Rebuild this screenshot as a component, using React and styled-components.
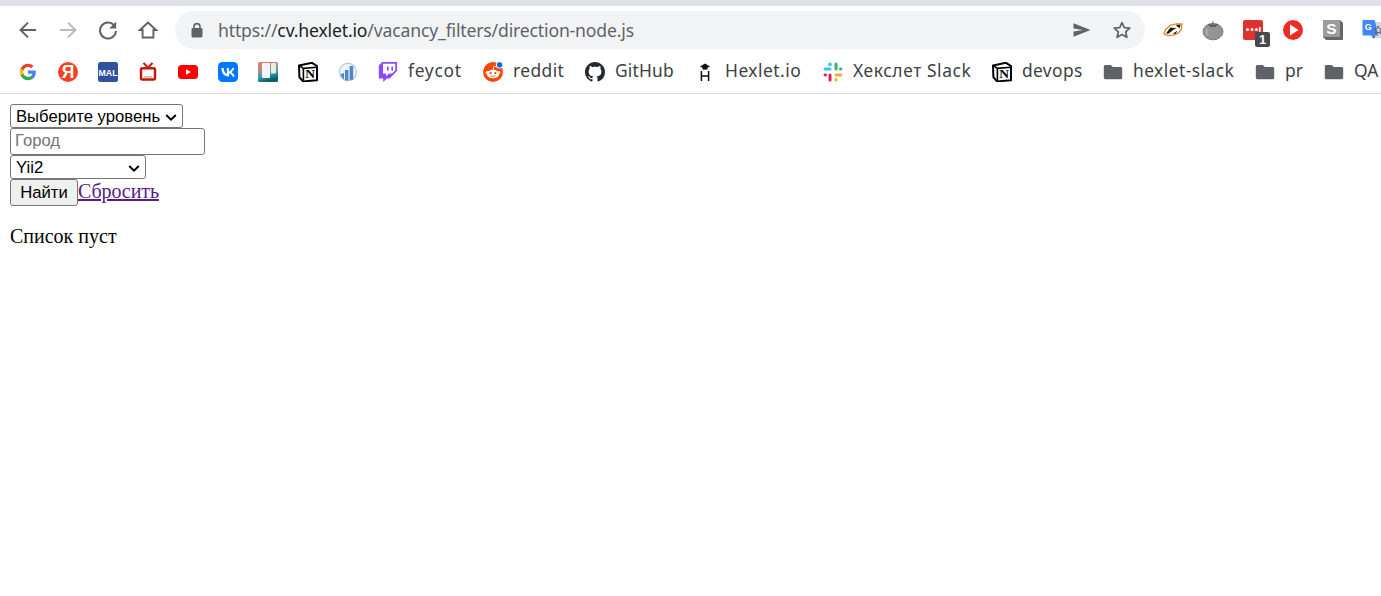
import React from "react";
import styled, { createGlobalStyle } from "styled-components";

const Global = createGlobalStyle`
  html, body { margin: 0; padding: 0; background: #fff; height: 100%; overflow: hidden; }
  #root { width: 1381px; height: 596px; overflow: hidden; }
`;

const Browser = styled.header`
  font-family: "Noto Sans", "Open Sans", sans-serif;
  width: 1381px;
  overflow: hidden;
`;
const TopStrip = styled.div`height: 6px; background: #dee1e6;`;
const Toolbar = styled.div`
  height: 44px;
  box-sizing: border-box;
  display: flex;
  align-items: flex-start;
  padding: 5px 0 0 8px;
  background: #fff;
`;
const IconSlot = styled.div`
  flex: none;
  width: 40px;
  height: 38px;
  display: flex;
  align-items: center;
  justify-content: center;
  position: relative;
`;
const NavSlot = styled(IconSlot)`
  height: 37px;
`;
const Omnibox = styled.div`
  flex: none;
  width: 970px;
  height: 38px;
  margin-left: 7px;
  border-radius: 19px;
  background: #f1f3f4;
  display: flex;
  align-items: center;
  padding: 0 3px 0 15px;
  box-sizing: border-box;
`;
const Url = styled.div`
  flex: 1;
  margin-left: 14px;
  font-size: 17.6px;
  letter-spacing: -0.16px;
  color: #5f6368;
  white-space: nowrap;
`;
const Host = styled.span`color: #202124;`;
const Extensions = styled.div`
  display: flex;
  margin-left: 8px;
  flex: none;
`;
const Badge = styled.span`
  position: absolute;
  left: 22px;
  top: 21px;
  width: 15px;
  height: 15px;
  border-radius: 2px;
  background: #474a4d;
  color: #fff;
  font: bold 13px/15px "Liberation Sans", sans-serif;
  text-align: center;
`;

const BookmarksBar = styled.nav`
  height: 43px;
  border-bottom: 1px solid #dadce0;
  display: flex;
  align-items: center;
  padding-left: 8px;
  background: #fff;
  overflow: hidden;
`;
const Bookmark = styled.div`
  flex: none;
  display: flex;
  align-items: center;
  gap: 10px;
  padding: 0 10px;
  margin-right: ${p => p.$after || 0}px;
  height: 30px;
`;
const Label = styled.span`
  display: block;
  width: ${p => p.$w}px;
  margin-bottom: 3px;
  font-size: 17.4px;
  letter-spacing: ${p => p.$track}px;
  line-height: 24px;
  color: #3c4043;
  white-space: nowrap;
`;

const Page = styled.main`
  padding: 10px;
  font-family: "Liberation Serif", "Times New Roman", serif;
  font-size: 20px;
  color: #000;
`;
const Form = styled.form`
  display: flex;
  flex-direction: column;
  align-items: flex-start;
  margin: 0;
`;
const chevron = "data:image/svg+xml,%3Csvg xmlns='http://www.w3.org/2000/svg' width='12' height='7' viewBox='0 0 12 7'%3E%3Cpath d='M1.2 1 6 5.6 10.8 1' fill='none' stroke='%23000' stroke-width='2'/%3E%3C/svg%3E";
const Select = styled.select`
  display: block;
  appearance: none;
  width: ${p => p.$w}px;
  height: ${p => p.$h}px;
  box-sizing: border-box;
  margin: 0;
  padding: 0 4px 0 5px;
  font: 16.67px "Liberation Sans", Arial, sans-serif;
  color: #000;
  background: #fff url("${chevron}") no-repeat right 5px top 9px;
  border: 1px solid #767676;
  border-radius: 3px;
`;
const CityInput = styled.input`
  display: block;
  width: 195px;
  height: 27px;
  box-sizing: border-box;
  margin: 0;
  padding: 0 4px 2px;
  font: 16.67px "Liberation Sans", Arial, sans-serif;
  border: 1px solid #767676;
  border-radius: 3px;
  &::placeholder { color: #757575; opacity: 1; }
`;
const Actions = styled.div`
  display: flex;
  align-items: flex-start;
  height: 27px;
`;
const SubmitButton = styled.button`
  width: 68px;
  height: 27px;
  box-sizing: border-box;
  margin: 0;
  padding: 0;
  font: 16.67px "Liberation Sans", Arial, sans-serif;
  color: #000;
  background: #efefef;
  border: 1px solid #767676;
  border-radius: 3px;
`;
const ResetLink = styled.a`
  color: #551a8b;
  line-height: 24px;
  letter-spacing: -0.1px;
  text-decoration: underline;
`;
const Empty = styled.p`
  margin: 19px 0 0;
  line-height: 23px;
`;

const strokeIcon = { fill: "none", stroke: "#5f6368", strokeWidth: 2 };

const Back = ({ color = "#5f6368", flip }) => (
  <svg width="20" height="20" viewBox="0 0 20 20" style={flip ? { transform: "scaleX(-1)" } : undefined}>
    <path d="M18 10H3M10 2.6 2.6 10l7.4 7.4" fill="none" stroke={color} strokeWidth="2" />
  </svg>
);
const Reload = () => (
  <svg width="20" height="20" viewBox="0 0 20 20">
    <path d="M16 5.2A8 8 0 1 0 18 11" {...strokeIcon} />
    <path d="M18.2 1.6v7h-7z" fill="#5f6368" />
  </svg>
);
const Home = () => (
  <svg width="20" height="20" viewBox="0 0 20 20">
    <path d="M10 2.5 2 10h2.6v7.5h10.8V10H18z" {...strokeIcon} strokeWidth="1.9" strokeLinejoin="miter" />
  </svg>
);
const Lock = () => (
  <svg width="14" height="16" viewBox="0 0 14 16">
    <path d="M4 7V4.6a3 3 0 0 1 6 0V7" fill="none" stroke="#5f6368" strokeWidth="1.6" />
    <rect x="1.5" y="6" width="11" height="9.5" rx="1.4" fill="#5f6368" />
  </svg>
);
const Send = () => (
  <svg width="20" height="20" viewBox="0 0 20 20">
    <path d="M1.5 3.2 18.5 10 1.5 16.8v-5.2L11 10 1.5 8.4z" fill="#5f6368" />
  </svg>
);
const Star = () => (
  <svg width="20" height="20" viewBox="0 0 20 20">
    <path d="m10 2.6 2.3 5 5.5.6-4.1 3.7 1.2 5.4L10 14.6l-4.9 2.7 1.2-5.4-4.1-3.7 5.5-.6z" {...strokeIcon} strokeWidth="1.7" strokeLinejoin="round" />
  </svg>
);
const Google = () => (
  <svg width="20" height="20" viewBox="-1.5 -1.5 27 27">
    <path fill="#4285F4" d="M22.56 12.25c0-.78-.07-1.53-.2-2.25H12v4.26h5.92c-.26 1.37-1.04 2.53-2.21 3.31v2.77h3.57c2.08-1.92 3.28-4.74 3.28-8.09z" />
    <path fill="#34A853" d="M12 23c2.97 0 5.46-.98 7.28-2.66l-3.57-2.77c-.98.66-2.23 1.06-3.71 1.06-2.86 0-5.29-1.93-6.16-4.53H2.18v2.84C3.99 20.53 7.7 23 12 23z" />
    <path fill="#FBBC05" d="M5.84 14.09c-.22-.66-.35-1.36-.35-2.09s.13-1.43.35-2.09V7.07H2.18C1.43 8.55 1 10.22 1 12s.43 3.45 1.18 4.93l2.85-2.22.81-.62z" />
    <path fill="#EA4335" d="M12 5.38c1.62 0 3.06.56 4.21 1.64l3.15-3.15C17.45 2.09 14.97 1 12 1 7.7 1 3.99 3.47 2.18 7.07l3.66 2.84c.87-2.6 3.3-4.53 6.16-4.53z" />
  </svg>
);
const Yandex = () => (
  <svg width="20" height="20" viewBox="0 0 20 20">
    <circle cx="10" cy="10" r="10" fill="#fc3f1d" />
    <text x="10" y="16.2" textAnchor="middle" fontFamily="Liberation Sans, sans-serif" fontWeight="700" fontSize="17.5" fill="#fff">Я</text>
  </svg>
);
const Mal = () => (
  <svg width="20" height="20" viewBox="0 0 20 20">
    <rect width="20" height="20" rx="2.5" fill="#2e51a2" />
    <text x="10" y="13.6" textAnchor="middle" fontFamily="Liberation Sans, sans-serif" fontWeight="700" fontSize="8.8" fill="#fff">MAL</text>
  </svg>
);
const Tv = () => (
  <svg width="20" height="20" viewBox="0 0 20 20">
    <path d="M5.5 1 9.5 5M14.5 1l-4 4" stroke="#c4170c" strokeWidth="2" fill="none" />
    <rect x="3" y="6.2" width="14" height="11.3" rx="1.4" fill="none" stroke="#c4170c" strokeWidth="2.4" />
    <rect x="6" y="14" width="8" height="1.6" fill="#e8a6a0" />
  </svg>
);
const Youtube = () => (
  <svg width="20" height="20" viewBox="0 0 20 20">
    <rect y="3" width="20" height="14" rx="3.5" fill="#f00" />
    <path d="M8 7.2v5.6l4.8-2.8z" fill="#fff" />
  </svg>
);
const Vk = () => (
  <svg width="20" height="20" viewBox="0 0 20 20">
    <rect width="20" height="20" rx="4.4" fill="#07f" />
    <path d="M10.7 14.4c-4.6 0-7.2-3.1-7.3-8.4h2.3c.1 3.8 1.8 5.4 3.1 5.8V6h2.2v3.3c1.3-.1 2.7-1.6 3.2-3.3h2.2a6.4 6.4 0 0 1-3 4.2 6.7 6.7 0 0 1 3.5 4.2h-2.4c-.5-1.6-1.8-2.8-3.5-3v3z" fill="#fff" />
  </svg>
);
const Trello = () => (
  <svg width="20" height="20" viewBox="0 0 20 20">
    <defs>
      <linearGradient id="trelloBg" x1="0" y1="0" x2=".3" y2="1">
        <stop offset="0" stopColor="#ee7a62" />
        <stop offset=".45" stopColor="#a98d90" />
        <stop offset=".72" stopColor="#2fa5ad" />
        <stop offset="1" stopColor="#0b5f6d" />
      </linearGradient>
    </defs>
    <rect width="20" height="20" rx="1.5" fill="url(#trelloBg)" />
    <rect x="4" y="1" width="8" height="15" rx="1" fill="#f4f4f4" />
    <rect x="13" y="1" width="5" height="10.5" rx="1" fill="#e9e9ea" />
  </svg>
);
const Notion = () => (
  <svg width="20" height="20" viewBox="0 0 20 20">
    <path d="M1 3.4 14 .8l5 3.2v14.2L5 19.4 1.4 15.2z" fill="#fff" stroke="#000" strokeWidth="2" strokeLinejoin="round" />
    <path d="M1.8 3.8 5.4 6.4 19 5.2M5.4 6.4v12.4" fill="none" stroke="#000" strokeWidth="1.6" />
    <text x="12.2" y="16.4" textAnchor="middle" fontFamily="Liberation Serif, serif" fontWeight="700" fontSize="13.5" fill="#000">N</text>
  </svg>
);
const ChartRound = () => (
  <svg width="20" height="20" viewBox="0 0 20 20">
    <circle cx="10" cy="10" r="8.6" fill="#eef3fa" stroke="#a9c4e4" strokeWidth="1.1" />
    <path d="M2.6 12.2 6 11v6.4a8.6 8.6 0 0 1-3.4-5.2z" fill="#4f86c6" />
    <rect x="7" y="8" width="3.4" height="10.4" fill="#4f86c6" />
    <rect x="11.6" y="4" width="3.6" height="13.8" fill="#4f86c6" />
  </svg>
);
const Twitch = () => (
  <svg width="20" height="20" viewBox="0 0 20 20">
    <path d="M4.2 0 .8 3.4v13h4.4V20l3.6-3.6h2.8L19 9V0z" fill="#9146ff" />
    <path d="M5 1.7h12.3v6.6l-3.2 3.2H11l-2.9 2.8v-2.8H5z" fill="#fff" />
    <path d="M9 4.4h1.6v4.4H9zM13.4 4.4H15v4.4h-1.6z" fill="#9146ff" />
  </svg>
);
const Reddit = () => (
  <svg width="20" height="20" viewBox="0 0 20 20">
    <circle cx="10" cy="10" r="10" fill="#ff4500" />
    <ellipse cx="10" cy="12" rx="6.2" ry="4.3" fill="#fff" />
    <circle cx="4" cy="10.4" r="1.5" fill="#fff" />
    <circle cx="16" cy="10.4" r="1.5" fill="#fff" />
    <path d="M10 8 11 4.2l3 .7" stroke="#fff" fill="none" strokeWidth=".9" />
    <circle cx="7.6" cy="11.2" r="1.1" fill="#ff4500" />
    <circle cx="12.4" cy="11.2" r="1.1" fill="#ff4500" />
    <path d="M7.6 13.8q2.4 1.4 4.8 0" stroke="#ff4500" fill="none" strokeWidth=".8" />
    <circle cx="16.6" cy="2.9" r="3.3" fill="#0b6ed0" stroke="#fff" strokeWidth="1" />
  </svg>
);
const Github = () => (
  <svg width="20" height="20" viewBox="0 0 16 16">
    <path fill="#24292f" d="M8 0C3.58 0 0 3.58 0 8c0 3.54 2.29 6.53 5.47 7.59.4.07.55-.17.55-.38 0-.19-.01-.82-.01-1.49-2.01.37-2.53-.49-2.69-.94-.09-.23-.48-.94-.82-1.13-.28-.15-.68-.52-.01-.53.63-.01 1.08.58 1.23.82.72 1.21 1.87.87 2.33.66.07-.52.28-.87.51-1.07-1.78-.2-3.64-.89-3.64-3.95 0-.87.31-1.59.82-2.15-.08-.2-.36-1.02.08-2.12 0 0 .67-.21 2.2.82.64-.18 1.32-.27 2-.27s1.36.09 2 .27c1.53-1.04 2.2-.82 2.2-.82.44 1.1.16 1.92.08 2.12.51.56.82 1.27.82 2.15 0 3.07-1.87 3.75-3.65 3.95.29.25.54.73.54 1.48 0 1.07-.01 1.93-.01 2.2 0 .21.15.46.55.38A8.01 8.01 0 0 0 16 8c0-4.42-3.58-8-8-8z" />
  </svg>
);
const HexletMark = () => (
  <svg width="20" height="20" viewBox="0 0 20 20">
    <path d="M10 1.6 15 4.4 10 7 5 4.4z" fill="#111" />
    <rect x="7.6" y="5" width="4.8" height="2.6" fill="#111" />
    <path d="M6.4 9v10M13.6 9v10M6.4 14h7.2" stroke="#111" strokeWidth="1.5" fill="none" />
  </svg>
);
const Slack = () => (
  <svg width="20" height="20" viewBox="0 0 20 20">
    <rect x="0.5" y="5.4" width="8" height="3" rx="1.5" fill="#36c5f0" />
    <circle cx="7" cy="2.4" r="1.6" fill="#36c5f0" />
    <rect x="5.4" y="0.8" width="3" height="3" fill="#36c5f0" />
    <rect x="11.5" y="0.5" width="3" height="8" rx="1.5" fill="#2eb67d" />
    <rect x="16" y="5.4" width="3.4" height="3" rx="1.4" fill="#2eb67d" />
    <rect x="11.5" y="11.5" width="8" height="3" rx="1.5" fill="#ecb22e" />
    <rect x="11.5" y="16" width="3" height="3.4" rx="1.4" fill="#ecb22e" />
    <rect x="5.5" y="11.5" width="3" height="8" rx="1.5" fill="#e01e5a" />
    <rect x="0.6" y="11.5" width="3.4" height="3" rx="1.4" fill="#e01e5a" />
  </svg>
);
const Folder = () => (
  <svg width="20" height="20" viewBox="0 0 20 20">
    <path d="M2.4 3h5.4l2 2h7.8c.9 0 1.6.7 1.6 1.6v9c0 .9-.7 1.6-1.6 1.6H2.4C1.5 17.2.8 16.5.8 15.6V4.6C.8 3.7 1.5 3 2.4 3z" fill="#5f6368" />
  </svg>
);

const Badger = () => (
  <svg width="20" height="20" viewBox="0 0 20 20">
    <path d="M.8 14 2.6 9.4 7 5.4l6.4-1.6 5.6.2-.6 5-3 4-5 2.2-5.4.4z" fill="#fff" stroke="#e8861e" strokeWidth="1.3" strokeLinejoin="round" />
    <path d="M3 13.4 7.4 7.4l6 .8-2.6 1.4-5.4 4.2zM12.8 5l4.8-.2-.8 3.4-2.2-1.4zM9.6 13.8l4.6-3-1.2 3z" fill="#1a1a1a" />
  </svg>
);
const Tomato = () => (
  <svg width="22" height="22" viewBox="0 0 22 22">
    <ellipse cx="11" cy="12.6" rx="10" ry="8.2" fill="#959595" stroke="#7c7c7c" />
    <path d="M11 2v4M6.5 5.5 11 6.5l4.5-1-2.5 2.4L11 7l-2 .9z" stroke="#555" fill="#555" strokeWidth=".8" />
    <path d="M5 10q-1.4 3 1 6" stroke="#b5b5b5" fill="none" strokeWidth="1.2" />
  </svg>
);
const RedDots = () => (
  <svg width="20" height="20" viewBox="0 0 20 20">
    <rect width="20" height="20" rx="2" fill="#e03131" />
    <circle cx="4.5" cy="9.5" r="1.5" fill="#fff" />
    <circle cx="9" cy="9.5" r="1.5" fill="#fff" />
    <circle cx="13.5" cy="9.5" r="1.5" fill="#fff" />
    <rect x="16" y="7" width="1.6" height="5" fill="#fff" />
  </svg>
);
const PlayRed = () => (
  <svg width="20" height="20" viewBox="0 0 20 20">
    <circle cx="10" cy="10" r="10" fill="#ee2b24" />
    <path d="M7 4.6v10.8l8.6-5.4z" fill="#fff" />
  </svg>
);
const SKey = () => (
  <svg width="20" height="20" viewBox="0 0 20 20">
    <path d="M0 0h17l3 3v17H3l-3-3z" fill="#666" />
    <rect width="17" height="17" rx="1" fill="#9c9c9c" />
    <text x="8.5" y="14" textAnchor="middle" fontFamily="Liberation Sans, sans-serif" fontWeight="700" fontSize="15.5" fill="#fff">S</text>
  </svg>
);
const Translate = () => (
  <svg width="22" height="22" viewBox="0 0 22 22">
    <path d="M9 3h11a1 1 0 0 1 1 1v14a1 1 0 0 1-1 1H9z" fill="#d5d8dc" />
    <path d="M1.5 1h11.2l3.6 15.6H1.5a1 1 0 0 1-1-1V2a1 1 0 0 1 1-1z" fill="#4285f4" />
    <path d="M10 16.6l1.4 3.4 2.2-3.4z" fill="#3367c6" />
    <text x="6.2" y="11" textAnchor="middle" fontFamily="Liberation Sans, sans-serif" fontWeight="700" fontSize="9" fill="#fff">G</text>
    <path d="m16 7 1.2 2.6 2.8.3-2.1 1.9.6 2.8-2.5-1.4-2.5 1.4.6-2.8-2.1-1.9 2.8-.3z" fill="none" stroke="#5f6368" strokeWidth="1" />
  </svg>
);

const bookmarks = [
  { icon: <Google /> }, { icon: <Yandex /> }, { icon: <Mal /> }, { icon: <Tv /> },
  { icon: <Youtube /> }, { icon: <Vk /> }, { icon: <Trello /> }, { icon: <Notion /> },
  { icon: <ChartRound /> },
  { icon: <Twitch />, text: "feycot", w: 54, after: 1, track: 0.7 },
  { icon: <Reddit />, text: "reddit", w: 52, track: 0.4 },
  { icon: <Github />, text: "GitHub", w: 60, track: 0.2 },
  { icon: <HexletMark />, text: "Hexlet.io", w: 78, track: 0.5 },
  { icon: <Slack />, text: "Хекслет Slack", w: 119, track: 0.6 },
  { icon: <Notion />, text: "devops", w: 61, track: 0.35 },
  { icon: <Folder />, text: "hexlet-slack", w: 102, track: 0.45 },
  { icon: <Folder />, text: "pr", w: 19, track: 0 },
  { icon: <Folder />, text: "QA", w: 27, track: 0 },
];

export default function App() {
  return (
    <>
      <Global />
      <Browser>
        <TopStrip />
        <Toolbar>
          <NavSlot><Back /></NavSlot>
          <NavSlot><Back flip color="#b7b9bc" /></NavSlot>
          <NavSlot><Reload /></NavSlot>
          <NavSlot><Home /></NavSlot>
          <Omnibox>
            <Lock />
            <Url>https://<Host>cv.hexlet.io</Host>/vacancy_filters/direction-node.js</Url>
            <IconSlot><Send /></IconSlot>
            <IconSlot><Star /></IconSlot>
          </Omnibox>
          <Extensions>
            <IconSlot><Badger /></IconSlot>
            <IconSlot><Tomato /></IconSlot>
            <IconSlot><RedDots /><Badge>1</Badge></IconSlot>
            <IconSlot><PlayRed /></IconSlot>
            <IconSlot><SKey /></IconSlot>
            <IconSlot><Translate /></IconSlot>
          </Extensions>
        </Toolbar>
        <BookmarksBar>
          {bookmarks.map((b, i) => (
            <Bookmark key={i} $after={b.after}>
              {b.icon}
              {b.text && <Label $w={b.w} $track={b.track}>{b.text}</Label>}
            </Bookmark>
          ))}
        </BookmarksBar>
      </Browser>
      <Page>
        <Form onSubmit={e => e.preventDefault()}>
          <Select $w={173} $h={24} defaultValue="">
            <option value="">Выберите уровень</option>
          </Select>
          <CityInput placeholder="Город" />
          <Select $w={136} $h={24} defaultValue="yii2">
            <option value="yii2">Yii2</option>
          </Select>
          <Actions>
            <SubmitButton type="submit">Найти</SubmitButton>
            <ResetLink href="#reset">Сбросить</ResetLink>
          </Actions>
        </Form>
        <Empty>Список пуст</Empty>
      </Page>
    </>
  );
}
